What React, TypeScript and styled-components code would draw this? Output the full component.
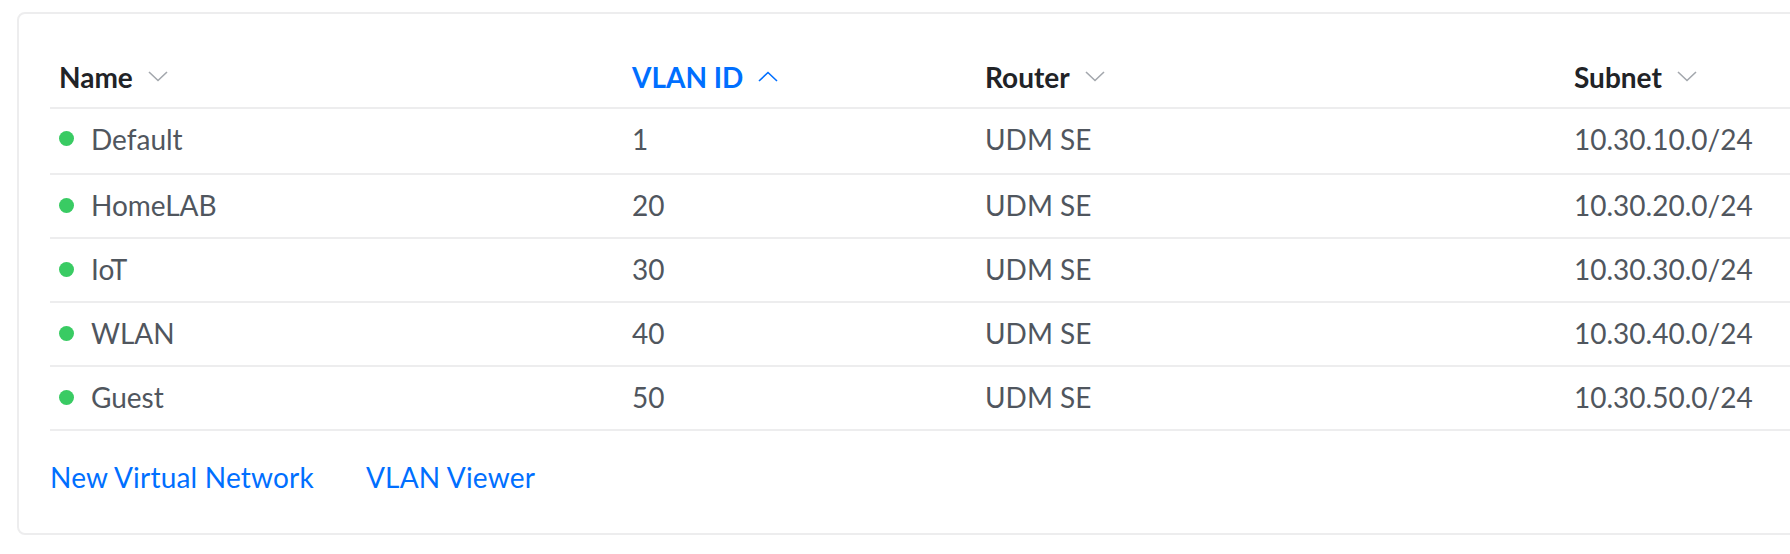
import React from "react";
import styled, { createGlobalStyle } from "styled-components";

const Global = createGlobalStyle`
  html, body { margin: 0; padding: 0; background: #ffffff; overflow: hidden; }
  body { font-family: Lato, "Noto Sans", sans-serif; -webkit-font-smoothing: antialiased; }
`;

const Card = styled.div`
  margin: 12px 0 0 17px;
  width: 1840px;
  border: 2px solid #ededee;
  border-radius: 8px;
  padding: 32px 0 40px 31px;
  box-sizing: border-box;
`;

const Row = styled.div<{ $first?: boolean }>`
  display: grid;
  grid-template-columns: 573px 353px 589px 1fr;
  height: ${(p) => (p.$first ? 66 : 64)}px;
  padding-bottom: ${(p) => (p.$first ? 5 : 2)}px;
  box-sizing: border-box;
  align-items: center;
  border-bottom: 2px solid #ededee;
`;

const HeadRow = styled(Row)`
  height: 63px;
  padding-bottom: 0;
`;

const HeadCell = styled.div<{ $active?: boolean }>`
  display: flex;
  align-items: center;
  gap: 15px;
  padding-left: 9px;
  font-size: 28px;
  font-weight: 700;
  color: ${(p) => (p.$active ? "#006fff" : "#212327")};
  svg { flex: none; }
`;

const Cell = styled.div`
  display: flex;
  align-items: center;
  padding-left: 9px;
  font-size: 28px;
  font-weight: 400;
  color: #50565e;
`;

const Dot = styled.span`
  width: 15px;
  height: 15px;
  border-radius: 50%;
  background: #39cb63;
  margin-right: 17px;
  flex: none;
`;

const Footer = styled.div`
  display: flex;
  gap: 52px;
  padding-top: 30px;
  line-height: 32px;
`;

const Link = styled.a`
  font-size: 28px;
  letter-spacing: 0.2px;
  color: #006fff;
  text-decoration: none;
  cursor: pointer;
`;

const Chevron = ({ up, color }: { up?: boolean; color: string }) => (
  <svg width="20" height="11" viewBox="0 0 20 11">
    <polyline
      points={up ? "1,10 10,1.5 19,10" : "1,1 10,9.5 19,1"}
      fill="none"
      stroke={color}
      strokeWidth="1.6"
    />
  </svg>
);

const rows = [
  { name: "Default", id: "1", router: "UDM SE", subnet: "10.30.10.0/24" },
  { name: "HomeLAB", id: "20", router: "UDM SE", subnet: "10.30.20.0/24" },
  { name: "IoT", id: "30", router: "UDM SE", subnet: "10.30.30.0/24" },
  { name: "WLAN", id: "40", router: "UDM SE", subnet: "10.30.40.0/24" },
  { name: "Guest", id: "50", router: "UDM SE", subnet: "10.30.50.0/24" },
];

export default function App() {
  return (
    <>
      <Global />
      <Card>
        <HeadRow>
          <HeadCell>
            Name <Chevron color="#a3a7ad" />
          </HeadCell>
          <HeadCell $active>
            VLAN ID <Chevron up color="#006fff" />
          </HeadCell>
          <HeadCell>
            Router <Chevron color="#a3a7ad" />
          </HeadCell>
          <HeadCell>
            Subnet <Chevron color="#a3a7ad" />
          </HeadCell>
        </HeadRow>
        {rows.map((r, i) => (
          <Row key={r.name} $first={i === 0}>
            <Cell>
              <Dot />
              {r.name}
            </Cell>
            <Cell>{r.id}</Cell>
            <Cell>{r.router}</Cell>
            <Cell>{r.subnet}</Cell>
          </Row>
        ))}
        <Footer>
          <Link>New Virtual Network</Link>
          <Link>VLAN Viewer</Link>
        </Footer>
      </Card>
    </>
  );
}
